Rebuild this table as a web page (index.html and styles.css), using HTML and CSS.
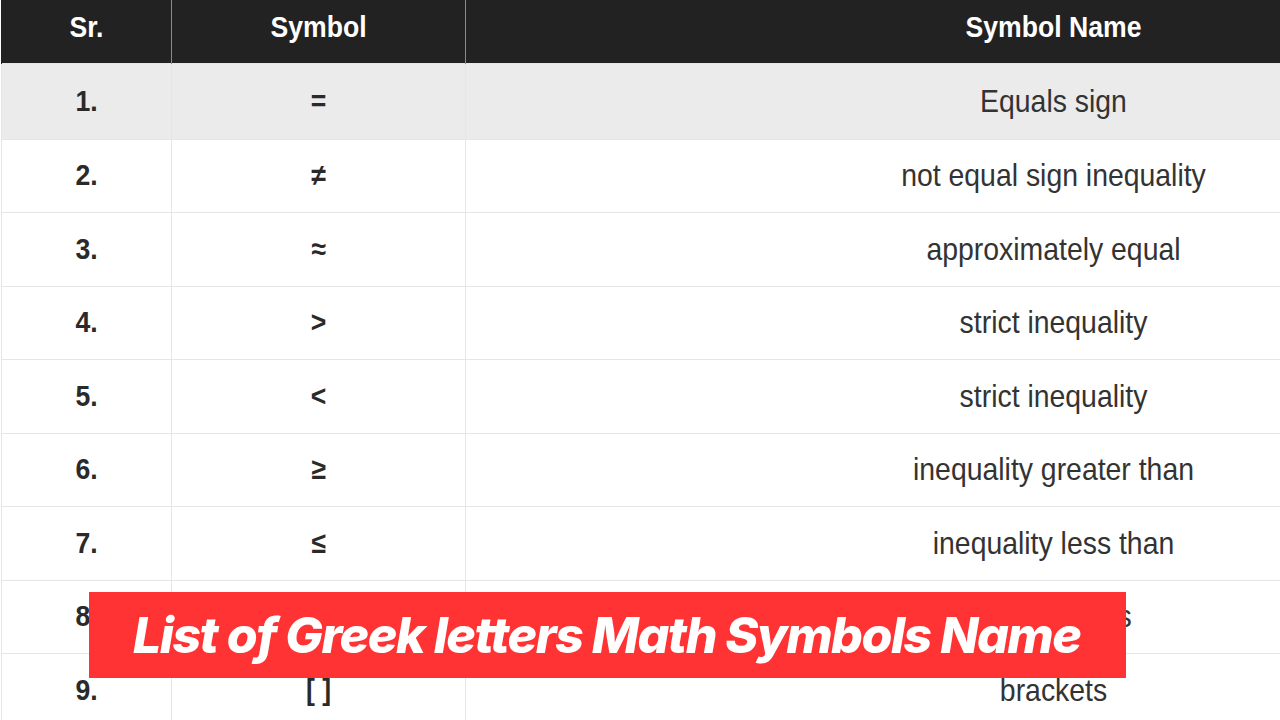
FILE: index.html
```html
<!DOCTYPE html>
<html lang="en">
<head>
<meta charset="utf-8">
<title>Math Symbols</title>
<link rel="stylesheet" href="styles.css">
</head>
<body>
<div class="page">
  <table class="symbols">
    <colgroup>
      <col class="c-sr"><col class="c-sym"><col class="c-name">
    </colgroup>
    <thead>
      <tr><th><span class="t">Sr.</span></th><th><span class="t">Symbol</span></th><th><span class="t">Symbol Name</span></th></tr>
    </thead>
    <tbody>
      <tr class="first"><td class="num"><span class="t">1.</span></td><td class="sym"><span class="t">=</span></td><td class="name"><span class="t">Equals sign</span></td></tr>
      <tr><td class="num"><span class="t">2.</span></td><td class="sym"><span class="t">≠</span></td><td class="name"><span class="t">not equal sign inequality</span></td></tr>
      <tr><td class="num"><span class="t">3.</span></td><td class="sym"><span class="t">≈</span></td><td class="name"><span class="t">approximately equal</span></td></tr>
      <tr><td class="num"><span class="t">4.</span></td><td class="sym"><span class="t">&gt;</span></td><td class="name"><span class="t">strict inequality</span></td></tr>
      <tr><td class="num"><span class="t">5.</span></td><td class="sym"><span class="t">&lt;</span></td><td class="name"><span class="t">strict inequality</span></td></tr>
      <tr><td class="num"><span class="t">6.</span></td><td class="sym"><span class="t">≥</span></td><td class="name"><span class="t">inequality greater than</span></td></tr>
      <tr><td class="num"><span class="t">7.</span></td><td class="sym"><span class="t">≤</span></td><td class="name"><span class="t">inequality less than</span></td></tr>
      <tr><td class="num"><span class="t">8.</span></td><td class="sym"><span class="t">( )</span></td><td class="name"><span class="t">parentheses</span></td></tr>
      <tr><td class="num"><span class="t">9.</span></td><td class="sym"><span class="t">[ ]</span></td><td class="name"><span class="t">brackets</span></td></tr>
    </tbody>
  </table>
  <div class="banner">List of Greek letters Math Symbols Name</div>
</div>
</body>
</html>
```
FILE: styles.css
```css
html, body {
  margin: 0;
  padding: 0;
  background: #ffffff;
  overflow: hidden;
}
.page {
  position: relative;
  width: 1280px;
  height: 720px;
  overflow: hidden;
  font-family: "Liberation Sans", Arial, sans-serif;
}
.symbols {
  border-collapse: collapse;
  table-layout: fixed;
  width: 1640px;
  margin-left: 1px;
  color: #2a2a2a;
}
.c-sr { width: 170px; }
.c-sym { width: 294px; }
.c-name { width: 1176px; }
.symbols th {
  background: #222222;
  color: #ffffff;
  font-weight: 700;
  font-size: 26.6px;
  height: 63px;
  padding: 0 0 8px 0;
  box-sizing: border-box;
  text-align: center;
  vertical-align: middle;
  border-left: 1px solid #8a8a8a;
  border-right: 1px solid #8a8a8a;
}
.symbols th:first-child { border-left: 1px solid #222; }
.symbols td {
  height: 72.5px;
  padding: 0;
  text-align: center;
  vertical-align: middle;
  border: 1px solid #e6e6e6;
}
.symbols tr.first td {
  background: #ebebeb;
  height: 75px;
}
.symbols td.num, .symbols td.sym {
  font-weight: 700;
  font-size: 26.6px;
}
.symbols td.name {
  font-weight: 400;
  font-size: 28.4px;
  color: #333;
}
.t {
  display: inline-block;
  transform: scaleY(1.12);
}
.symbols td.name .t { transform: scaleY(1.08); }
.banner {
  position: absolute;
  left: 89px;
  top: 592px;
  width: 1037px;
  height: 86px;
  box-sizing: border-box;
  padding-left: 44px;
  background: #ff3333;
  color: #ffffff;
  font-family: Inter, "Liberation Sans", sans-serif;
  font-weight: 800;
  font-style: italic;
  font-size: 50px;
  letter-spacing: -1.5px;
  line-height: 86px;
  white-space: nowrap;
}
```
